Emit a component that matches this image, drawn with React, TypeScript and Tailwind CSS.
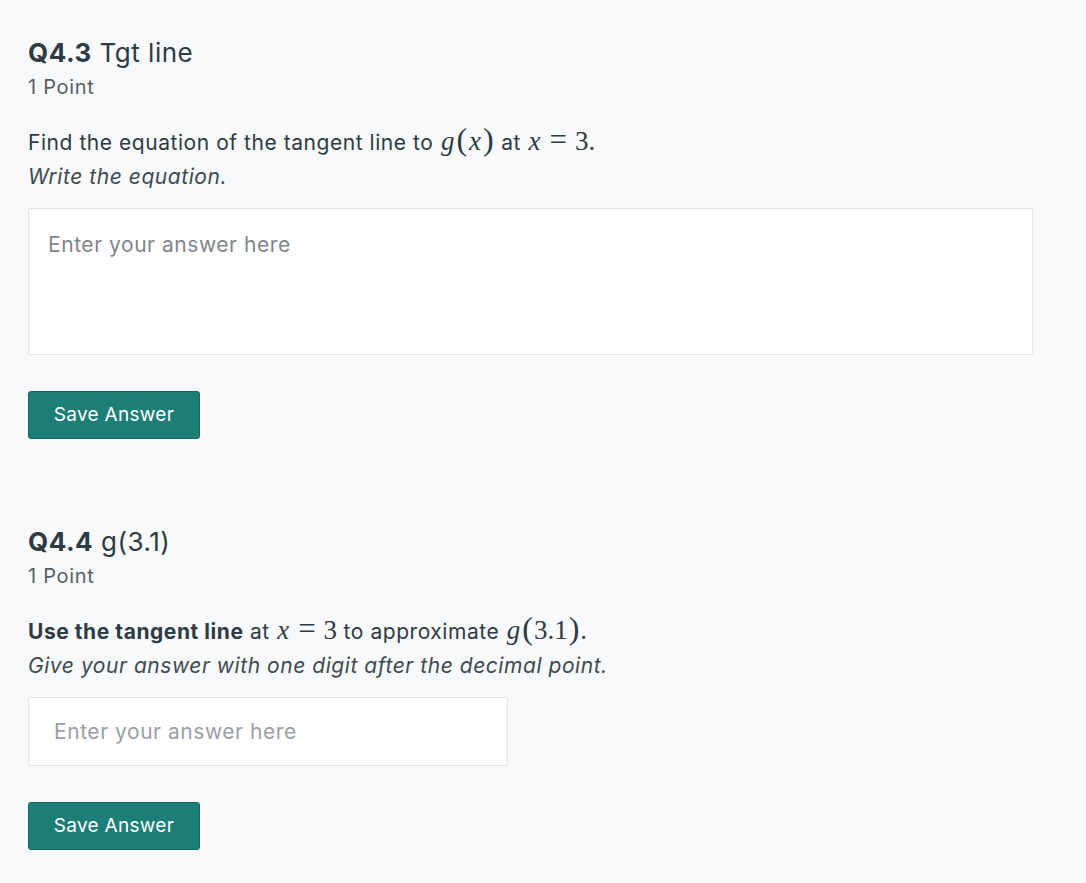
import React from "react";

const M = ({ children }: { children: React.ReactNode }) => (
  <span className="text-[27px] leading-none tracking-normal text-[#2d3b45]" style={{ fontFamily: '"Liberation Serif", "DejaVu Serif", serif' }}>
    {children}
  </span>
);
const I = ({ children }: { children: React.ReactNode }) => <i className="px-[1px]">{children}</i>;
const P = ({ children }: { children: React.ReactNode }) => <span className="text-[32px] leading-none px-[1px]">{children}</span>;
const Eq = () => <span className="text-[31px] leading-none mx-[8px]">=</span>;

function Question({
  num,
  title,
  body,
  hint,
  tall,
}: {
  num: string;
  title: string;
  body: React.ReactNode;
  hint: string;
  tall?: boolean;
}) {
  return (
    <div className="flex flex-col">
      <h2 className="text-[26px] leading-[34px] text-[#2d3b45] tracking-[0.5px]">
        <span className="font-bold">{num}</span> {title}
      </h2>
      <div className="text-[20px] leading-[28px] text-[#555f66] mt-[3px] tracking-[0.7px]">1 Point</div>
      <div className="mt-[22px] h-[36px] flex items-center text-[21px] text-[#2d3b45] tracking-[0.55px] whitespace-pre">{body}</div>
      <div className="text-[21px] leading-[36px] italic text-[#3d4a52] tracking-[0.55px]">{hint}</div>
      {tall ? (
        <div className="mt-[13px] w-[1005px] h-[147px] bg-white border border-[#e3e5e8] rounded-[2px] px-[19px] pt-[20px] text-[21px] text-[#80868b] tracking-[0.55px]">
          Enter your answer here
        </div>
      ) : (
        <div className="mt-[13px] w-[480px] h-[69px] bg-white border border-[#e3e5e8] rounded-[2px] px-[25px] flex items-center text-[21px] text-[#9aa0a6] tracking-[0.55px]">
          Enter your answer here
        </div>
      )}
      <button className="mt-[36px] w-[172px] h-[48px] bg-[#1d7d77] border border-[#17645f] rounded-[3px] text-white text-[19px] flex items-center justify-center tracking-[0.3px]">
        Save Answer
      </button>
    </div>
  );
}

export default function App() {
  return (
    <div
      className="min-h-[883px] w-full bg-[#f8f9fa] px-[28px] pt-[36px]"
      style={{ fontFamily: 'Inter, Lato, sans-serif' }}
    >
      <Question
        num="Q4.3"
        title="Tgt line"
        body={
          <span>
            Find the equation of the tangent line to{" "}
            <M>
              <I>g</I>
              <P>(</P>
              <I>x</I>
              <P>)</P>
            </M>{" "}
            at{" "}
            <M>
              <I>x</I>
              <Eq />
              3.
            </M>
          </span>
        }
        hint="Write the equation."
        tall
      />
      <div className="h-[86px]" />
      <Question
        num="Q4.4"
        title="g(3.1)"
        body={
          <span>
            <span className="font-bold">Use the tangent line</span> at{" "}
            <M>
              <I>x</I>
              <Eq />
              3
            </M>{" "}
            to approximate{" "}
            <M>
              <I>g</I>
              <P>(</P>3.1<P>)</P>.
            </M>
          </span>
        }
        hint="Give your answer with one digit after the decimal point."
      />
    </div>
  );
}
